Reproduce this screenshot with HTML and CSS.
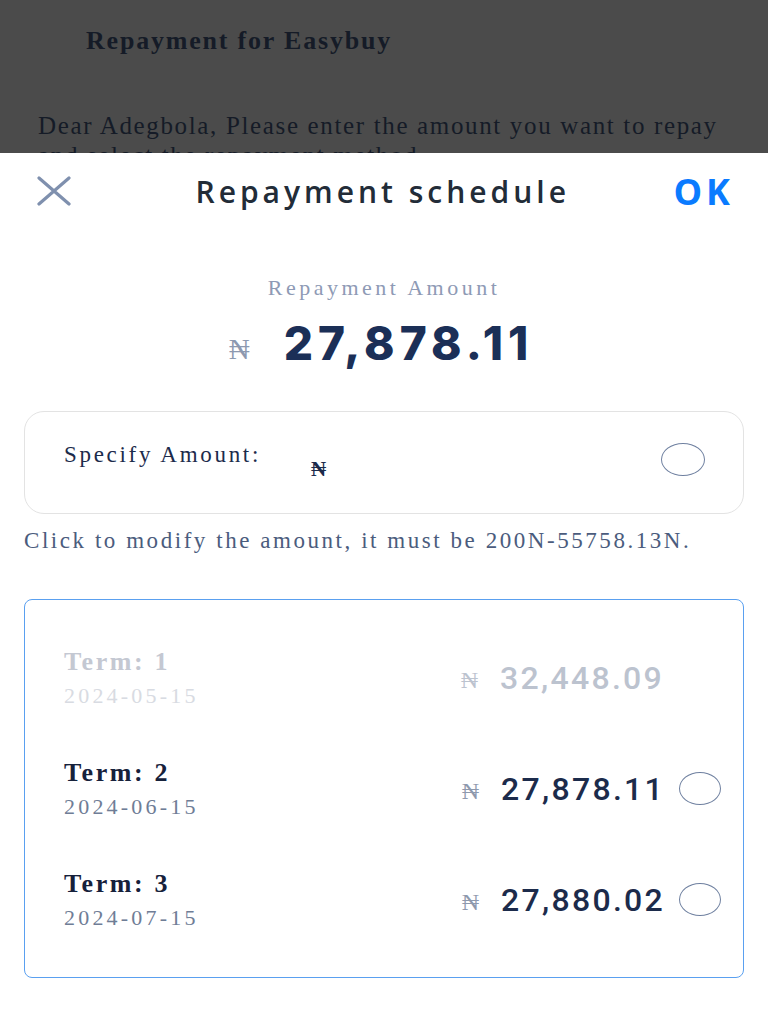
FILE: index.html
```html
<!DOCTYPE html>
<html lang="en">

<head>
    <meta charset="UTF-8">
    <meta name="viewport" content="width=device-width, initial-scale=1.0">
    <title>Repayment for Easybuy</title>
    <link rel="stylesheet" href="styles.css">
</head>

<body>
    <div class="page-behind">
        <h2 class="page-title">Repayment for Easybuy</h2>
        <p class="page-intro">Dear Adegbola, Please enter the amount you want to repay and select the repayment method.</p>
    </div>

    <div class="sheet">
        <div class="sheet-header">
            <button class="close-btn" aria-label="Close">
                <svg width="36" height="30" viewBox="0 0 36 30">
                    <path d="M3 2 L33 28 M33 2 L3 28" stroke="#7f90ae" stroke-width="3.2" stroke-linecap="round" fill="none"/>
                </svg>
            </button>
            <span class="sheet-title">Repayment schedule</span>
            <button class="ok-btn">OK</button>
        </div>

        <div class="amount-block">
            <p class="amount-label">Repayment Amount</p>
            <div class="amount-value">
                <span class="naira">₦</span>
                <span class="amount-number">27,878.11</span>
            </div>
        </div>

        <div class="specify-box">
            <span class="specify-label">Specify Amount:</span>
            <span class="specify-naira">₦</span>
            <span class="radio"></span>
        </div>
        <p class="hint">Click to modify the amount, it must be 200N-55758.13N.</p>

        <div class="terms" id="terms"></div>
    </div>

    <script>
        const terms = [
            { term: 1, date: "2024-05-15", amount: "32,448.09", paid: true },
            { term: 2, date: "2024-06-15", amount: "27,878.11", paid: false },
            { term: 3, date: "2024-07-15", amount: "27,880.02", paid: false }
        ];

        const termsDiv = document.getElementById('terms');
        terms.forEach(t => {
            const row = document.createElement('div');
            row.className = 'term-row' + (t.paid ? ' paid' : '');
            row.innerHTML = `
                <div class="term-info">
                    <div class="term-name">Term: ${t.term}</div>
                    <div class="term-date">${t.date}</div>
                </div>
                <div class="term-amount">
                    <span class="term-naira">₦</span>
                    <span class="term-number">${t.amount}</span>
                    ${t.paid ? '<span class="radio-space"></span>' : '<span class="radio small"></span>'}
                </div>
            `;
            termsDiv.appendChild(row);
        });
    </script>
</body>

</html>
```

FILE: styles.css
```css
body {
    margin: 0;
    background: #fff;
    font-family: 'Liberation Serif', 'Times New Roman', serif;
    width: 768px;
    height: 1024px;
    overflow: hidden;
}

.page-behind {
    background: #4b4b4b;
    height: 153px;
    overflow: hidden;
    color: #151b27;
}

.page-title {
    margin: 0;
    padding: 26px 0 0 86px;
    font-size: 26px;
    font-weight: bold;
    letter-spacing: 1.8px;
}

.page-intro {
    margin: 55px 0 0 38px;
    font-size: 25px;
    line-height: 30px;
    letter-spacing: 1.65px;
    width: 700px;
}

.sheet {
    background: #fff;
}

.sheet-header {
    display: flex;
    align-items: center;
    justify-content: space-between;
    height: 76px;
    padding: 0 38px 0 36px;
}

.close-btn,
.ok-btn {
    background: none;
    border: none;
    padding: 0;
    cursor: pointer;
}

.close-btn svg {
    display: block;
}

.sheet-title {
    font-family: 'Open Sans', sans-serif;
    font-size: 30px;
    font-weight: 600;
    color: #222c38;
    letter-spacing: 4px;
    margin-left: 76px;
}

.ok-btn {
    font-family: 'Open Sans', sans-serif;
    font-size: 36px;
    font-weight: 700;
    color: #0a7bff;
    letter-spacing: 4px;
    margin-left: 56px;
    margin-right: -4px;
}

.amount-block {
    text-align: center;
    padding-top: 46px;
}

.amount-label {
    margin: 0;
    font-size: 22px;
    color: #8e9ab5;
    letter-spacing: 3.5px;
}

.amount-value {
    display: flex;
    align-items: center;
    justify-content: center;
    gap: 34px;
    margin-top: 14px;
    margin-right: 6px;
}

.naira {
    font-size: 29px;
    color: #8d99b0;
    margin-top: 12px;
}

.amount-number {
    font-family: 'Inter', sans-serif;
    font-size: 46px;
    font-weight: 800;
    color: #1b2f57;
    letter-spacing: 5px;
}

.specify-box {
    display: flex;
    align-items: center;
    margin: 40px 24px 0;
    height: 101px;
    border: 1px solid #e3e3e3;
    border-radius: 20px;
    padding: 0 38px 0 39px;
    color: #1c2b4b;
}

.specify-label {
    font-size: 23px;
    letter-spacing: 2.7px;
    margin-top: -16px;
}

.specify-naira {
    font-size: 21px;
    font-weight: bold;
    margin: 14px 0 0 50px;
    flex: 1;
}

.radio {
    width: 42px;
    height: 31px;
    border: 1.5px solid #6f80a0;
    border-radius: 50%;
    margin-top: -6px;
}

.hint {
    margin: 14px 24px 0;
    font-size: 23px;
    color: #4b5c7d;
    letter-spacing: 2.55px;
}

.terms {
    box-sizing: border-box;
    margin: 45px 24px 0;
    border: 1px solid #5aa0f0;
    border-radius: 8px;
    height: 379px;
    padding: 22px 22px 0 39px;
}

.term-row {
    display: flex;
    justify-content: space-between;
    align-items: center;
    height: 111px;
}

.term-name {
    font-size: 26px;
    font-weight: bold;
    color: #16213b;
    letter-spacing: 2.6px;
}

.term-date {
    font-size: 22px;
    color: #6f7d96;
    letter-spacing: 3.2px;
    margin-top: 6px;
}

.term-amount {
    display: flex;
    align-items: center;
}

.term-naira {
    font-size: 24px;
    color: #8e99ad;
    margin: 6px 22px 0 0;
}

.term-number {
    font-family: 'Roboto', sans-serif;
    font-size: 32px;
    font-weight: 500;
    color: #1c2b4b;
    letter-spacing: 2.3px;
    width: 178px;
}

.radio.small {
    width: 40px;
    height: 31px;
    margin: 0;
}

.radio-space {
    width: 43px;
}

.term-row.paid .term-name {
    color: #c4c8d2;
}

.term-row.paid .term-date {
    color: #d8dbe2;
}

.term-row.paid .term-naira,
.term-row.paid .term-number {
    color: #bcc3cf;
}
```
